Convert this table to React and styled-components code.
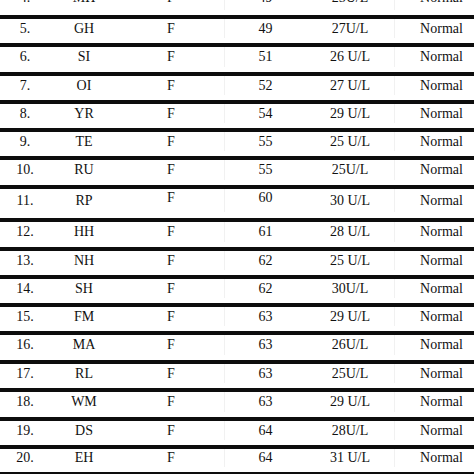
import React from "react"
import styled, { createGlobalStyle } from "styled-components"

const GlobalStyle = createGlobalStyle`
  html, body {
    margin: 0;
    padding: 0;
    background: #fff;
  }
  body {
    font-family: "Liberation Serif", "Times New Roman", serif;
    color: #111;
  }
`

// 每列宽度（最后一列内容略靠右）
const columns = "50px 68px 106px 82px 88px 80px"

const Page = styled.div`
  width: 474px;
  height: 474px;
  overflow: hidden;
`

const Table = styled.div`
  display: flex;
  flex-direction: column;
  margin-top: -14px;
  border-bottom: 4px solid #0d0d0d;
`

const Row = styled.div`
  display: grid;
  grid-template-columns: ${columns};
  box-sizing: border-box;
  height: ${p => p.$h}px;
  border-top: ${p => (p.$first ? "0" : "4px solid #0d0d0d")};
  padding-bottom: ${p => p.$lift}px;
`

const Cell = styled.div`
  display: flex;
  align-items: center;
  justify-content: center;
  font-size: 14px;
  white-space: pre;
  padding-left: ${p => p.$pl || 0}px;
  padding-bottom: ${p => (p.$raise ? 6 : 0)}px;
  border-left: ${p => (p.$rule ? "1px solid #f1f1f1" : "0")};
`

const rows = [
  ["4.", "MH", "F", "49", "25U/L", "Normal"],
  ["5.", "GH", "F", "49", "27U/L", "Normal"],
  ["6.", "SI", "F", "51", "26 U/L", "Normal"],
  ["7.", "OI", "F", "52", "27 U/L", "Normal"],
  ["8.", "YR", "F", "54", "29 U/L", "Normal"],
  ["9.", "TE", "F", "55", "25 U/L", "Normal"],
  ["10.", "RU", "F", "55", "25U/L", "Normal"],
  ["11.", "RP", "F", "60", "30 U/L", "Normal"],
  ["12.", "HH", "F", "61", "28 U/L", "Normal"],
  ["13.", "NH", "F", "62", "25 U/L", "Normal"],
  ["14.", "SH", "F", "62", "30U/L", "Normal"],
  ["15.", "FM", "F", "63", "29 U/L", "Normal"],
  ["16.", "MA", "F", "63", "26U/L", "Normal"],
  ["17.", "RL", "F", "63", "25U/L", "Normal"],
  ["18.", "WM", "F", "63", "29 U/L", "Normal"],
  ["19.", "DS", "F", "64", "28U/L", "Normal"],
  ["20.", "EH", "F", "64", "31 U/L", "Normal"],
]

// 行高（按线条间距）
const heights = [29, 28, 29, 28, 28, 28, 29, 33, 29, 28, 28, 28, 29, 28, 29, 28, 27]

export default function App() {
  return (
    <>
      <GlobalStyle />
      <Page>
        <Table>
          {rows.map((r, i) => (
            <Row key={r[0]} $h={heights[i]} $first={i === 0} $lift={i === 7 ? 6 : 5}>
              {r.map((c, j) => (
                <Cell
                  key={j}
                  $pl={j === 5 ? 14 : 0}
                  $rule={j === 3 || j === 5}
                  $raise={i === 7 && (j === 2 || j === 3)}
                >
                  {c}
                </Cell>
              ))}
            </Row>
          ))}
        </Table>
      </Page>
    </>
  )
}
